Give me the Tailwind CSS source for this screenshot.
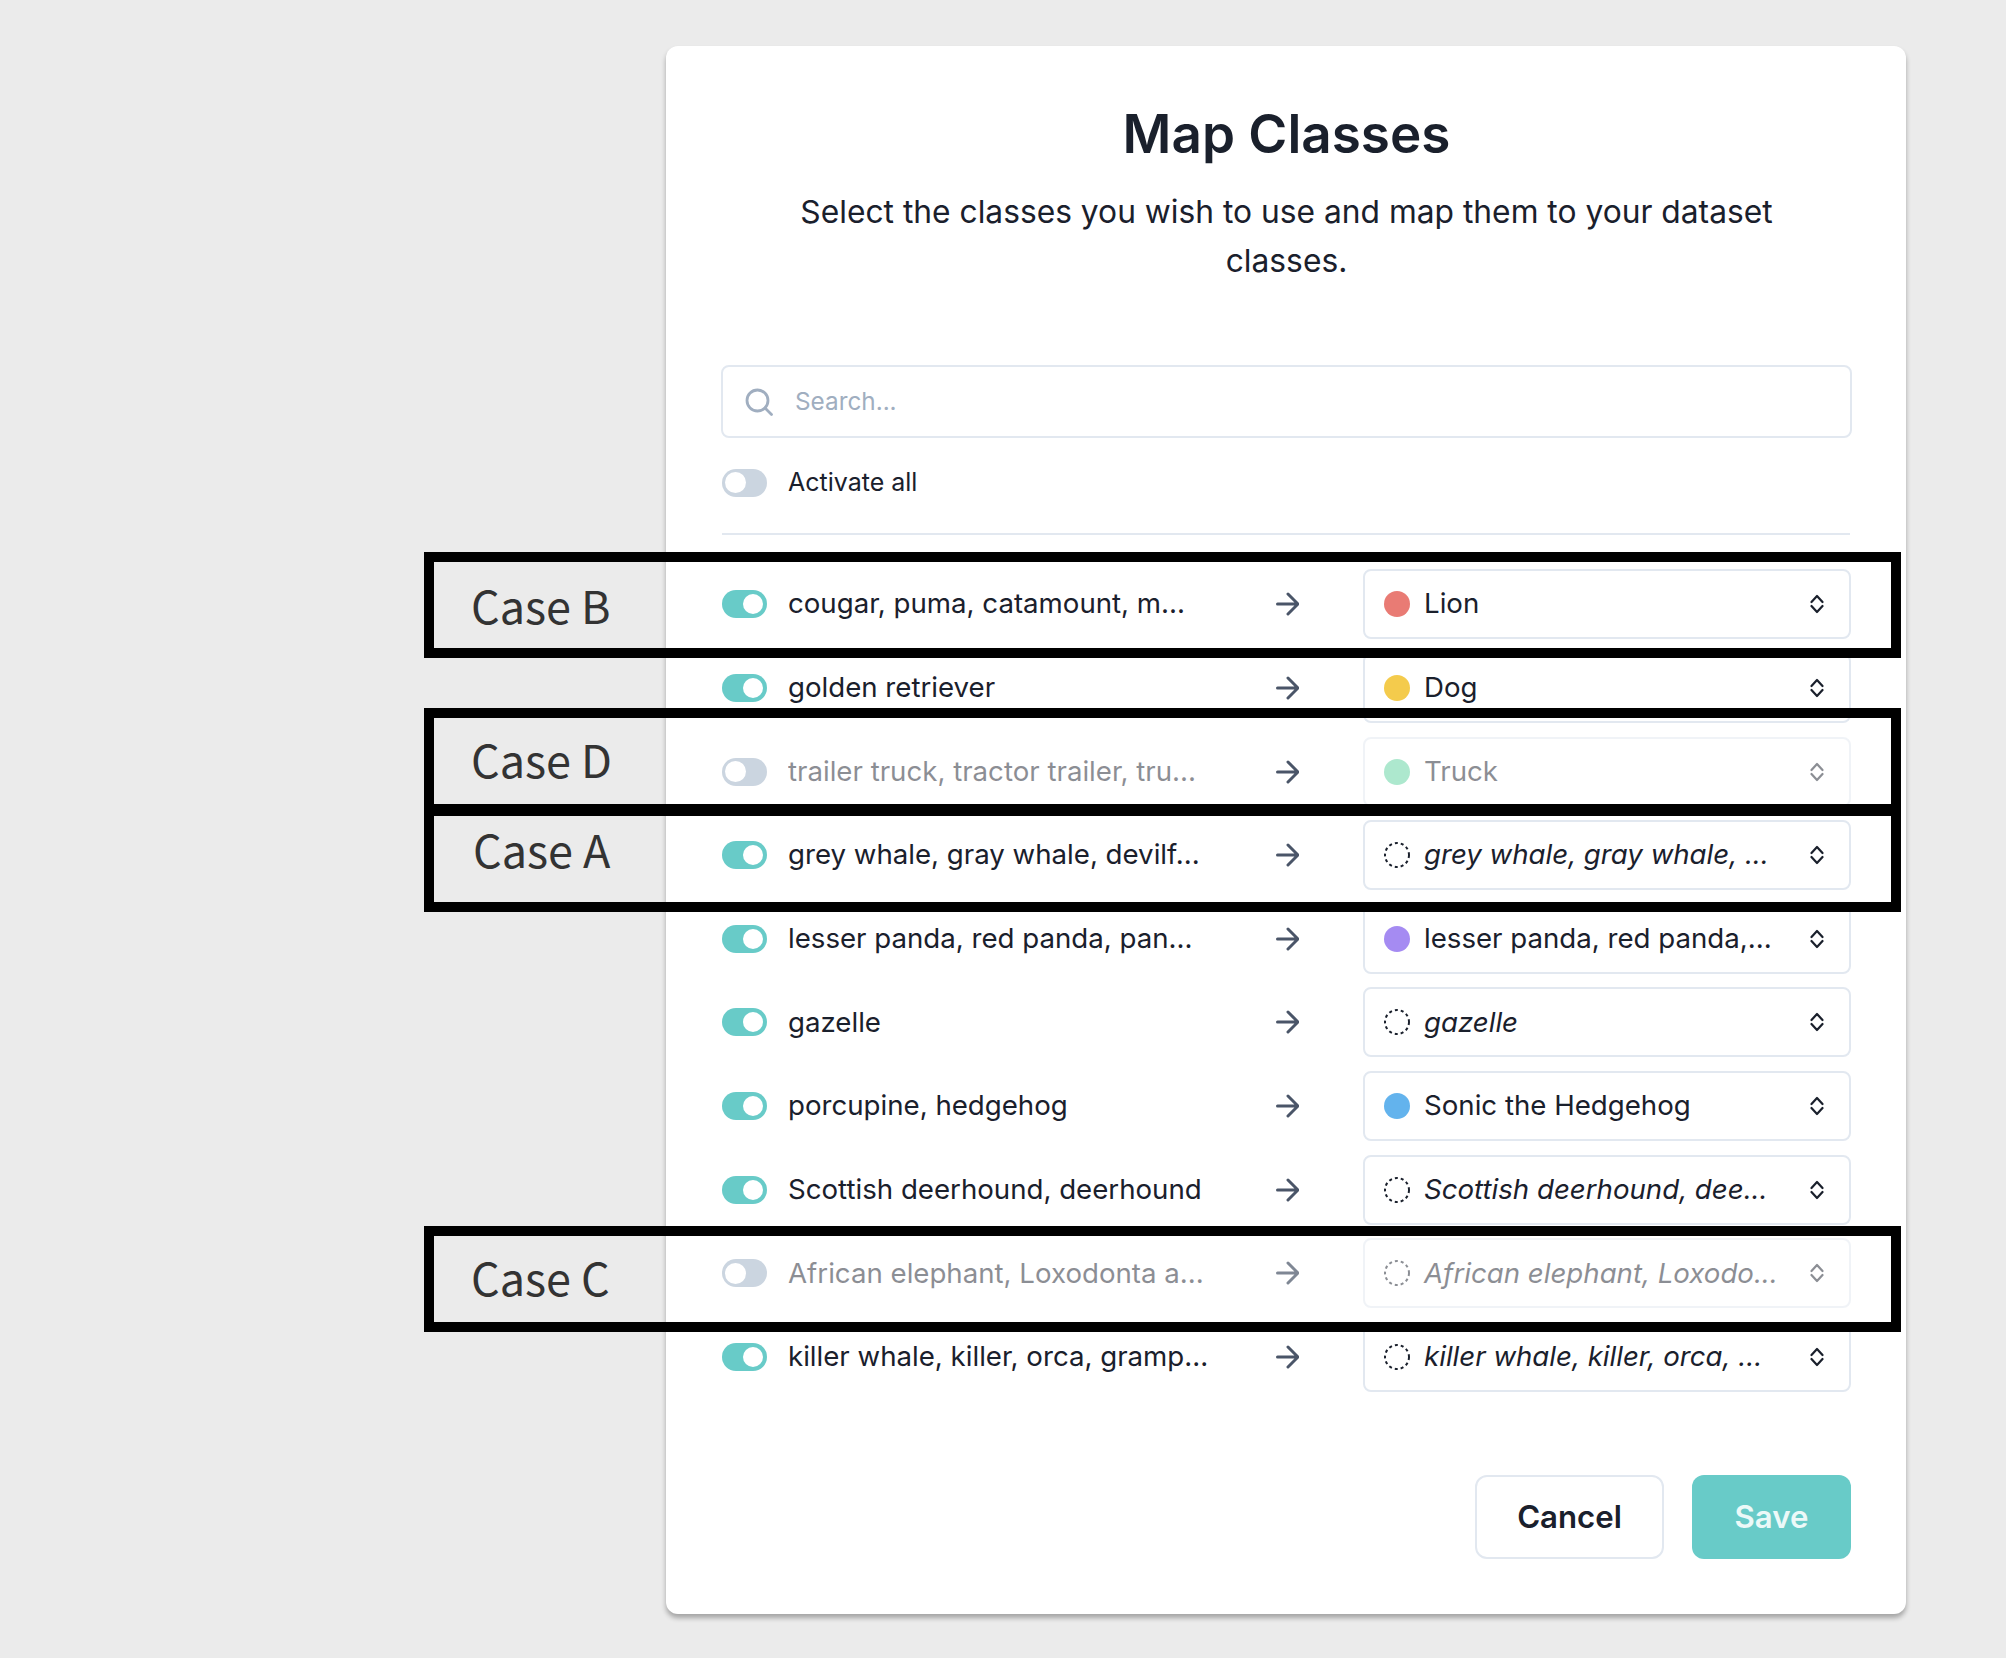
<!DOCTYPE html>
<html lang="en">
<head>
<meta charset="utf-8">
<title>Map Classes</title>
<script src="https://cdn.jsdelivr.net/npm/@tailwindcss/browser@4"></script>
</head>
<body class="relative m-0 h-[1658px] w-[2006px] overflow-hidden bg-[#ebebeb] font-['Inter',sans-serif] text-[#1a202c]">
<main class="ml-[666px] mt-[46px] flex h-[1568px] w-[1240px] flex-col rounded-xl bg-white pl-[55px] pr-[54px] shadow-[0_4px_5px_rgba(0,0,0,0.3)]">
  <h1 class="mt-[62px] text-center text-[53px] leading-[52px] font-semibold">Map Classes</h1>
  <p class="mx-auto mt-[28px] w-[1010px] text-center text-[31.75px] leading-[48.6px]">Select the classes you wish to use and map them to your dataset classes.</p>
  <div class="mt-[80px] flex h-[73px] items-center rounded-lg border-2 border-[#e2e8f0] pl-[22px]">
    <svg class="h-[28px] w-[28px] text-[#a0aec0]" viewBox="0 0 28 28" fill="none" stroke="currentColor" stroke-width="2.8" stroke-linecap="round"><circle cx="12.5" cy="12.5" r="10.5"/><path d="M20 20l6.5 6.5"/></svg>
    <span class="ml-[22px] text-[24.3px] text-[#a0aec0]">Search...</span>
  </div>
  <div class="mt-[30.5px] flex h-[28px] items-center pl-px">
    <span class="flex h-[28px] w-[45px] items-center justify-start rounded-full bg-[#cbd5e0] p-[3px]"><span class="h-[21px] w-[21px] rounded-full bg-white"></span></span>
    <span class="ml-[21px] text-[25px]">Activate all</span>
  </div>
  <div class="mt-[36.5px] ml-px h-[2px] w-[1128px] bg-[#e2e8f0]"></div>
  <div class="mt-[34px] flex flex-col gap-[13.67px]">
    <div class="flex h-[70px] items-center pl-px">
      <span class="flex h-[28px] w-[45px] items-center justify-end rounded-full bg-[#68cbc8] p-[4px]"><span class="h-[20px] w-[20px] rounded-full bg-white"></span></span>
      <span class="ml-[21px] w-[487px] text-[27.65px]">cougar, puma, catamount, m...</span>
      <svg class="h-[24px] w-[24px] text-[#4a5568]" viewBox="0 0 24 24" fill="none" stroke="currentColor" stroke-width="3" stroke-linecap="round" stroke-linejoin="round"><path d="M2.5 12h20M13 2l10 10-10 10"/></svg>
      <div class="ml-auto mr-px flex h-[70px] w-[488px] items-center rounded-lg border-2 border-[#e2e8f0] pl-[19px] pr-[25px]">
        <span class="h-[26px] w-[26px] rounded-full bg-[#e97b74]"></span>
        <span class="ml-[14px] flex-1 text-[27.65px]">Lion</span>
        <svg class="h-[20px] w-[14px]" viewBox="0 0 14 20" fill="none" stroke="currentColor" stroke-width="2.2" stroke-linecap="round" stroke-linejoin="round"><path d="M1.5 8 7 2l5.5 6M1.5 12 7 18l5.5-6"/></svg>
      </div>
    </div>
    <div class="flex h-[70px] items-center pl-px">
      <span class="flex h-[28px] w-[45px] items-center justify-end rounded-full bg-[#68cbc8] p-[4px]"><span class="h-[20px] w-[20px] rounded-full bg-white"></span></span>
      <span class="ml-[21px] w-[487px] text-[27.65px]">golden retriever</span>
      <svg class="h-[24px] w-[24px] text-[#4a5568]" viewBox="0 0 24 24" fill="none" stroke="currentColor" stroke-width="3" stroke-linecap="round" stroke-linejoin="round"><path d="M2.5 12h20M13 2l10 10-10 10"/></svg>
      <div class="ml-auto mr-px flex h-[70px] w-[488px] items-center rounded-lg border-2 border-[#e2e8f0] pl-[19px] pr-[25px]">
        <span class="h-[26px] w-[26px] rounded-full bg-[#f4cb4c]"></span>
        <span class="ml-[14px] flex-1 text-[27.65px]">Dog</span>
        <svg class="h-[20px] w-[14px]" viewBox="0 0 14 20" fill="none" stroke="currentColor" stroke-width="2.2" stroke-linecap="round" stroke-linejoin="round"><path d="M1.5 8 7 2l5.5 6M1.5 12 7 18l5.5-6"/></svg>
      </div>
    </div>
    <div class="flex h-[70px] items-center pl-px">
      <span class="flex h-[28px] w-[45px] items-center justify-start rounded-full bg-[#cbd5e0] p-[3px]"><span class="h-[21px] w-[21px] rounded-full bg-white"></span></span>
      <span class="ml-[21px] w-[487px] text-[27.65px] opacity-50">trailer truck, tractor trailer, tru...</span>
      <svg class="h-[24px] w-[24px] text-[#4a5568]" viewBox="0 0 24 24" fill="none" stroke="currentColor" stroke-width="3" stroke-linecap="round" stroke-linejoin="round"><path d="M2.5 12h20M13 2l10 10-10 10"/></svg>
      <div class="ml-auto mr-px flex h-[70px] w-[488px] items-center rounded-lg border-2 border-[#e2e8f0]/50 pl-[19px] pr-[25px]">
        <span class="h-[26px] w-[26px] rounded-full bg-[#ade8ce]"></span>
        <span class="ml-[14px] flex-1 text-[27.65px] opacity-50">Truck</span>
        <svg class="h-[20px] w-[14px] opacity-50" viewBox="0 0 14 20" fill="none" stroke="currentColor" stroke-width="2.2" stroke-linecap="round" stroke-linejoin="round"><path d="M1.5 8 7 2l5.5 6M1.5 12 7 18l5.5-6"/></svg>
      </div>
    </div>
    <div class="flex h-[70px] items-center pl-px">
      <span class="flex h-[28px] w-[45px] items-center justify-end rounded-full bg-[#68cbc8] p-[4px]"><span class="h-[20px] w-[20px] rounded-full bg-white"></span></span>
      <span class="ml-[21px] w-[487px] text-[27.65px]">grey whale, gray whale, devilf...</span>
      <svg class="h-[24px] w-[24px] text-[#4a5568]" viewBox="0 0 24 24" fill="none" stroke="currentColor" stroke-width="3" stroke-linecap="round" stroke-linejoin="round"><path d="M2.5 12h20M13 2l10 10-10 10"/></svg>
      <div class="ml-auto mr-px flex h-[70px] w-[488px] items-center rounded-lg border-2 border-[#e2e8f0] pl-[19px] pr-[25px]">
        <svg class="h-[26px] w-[26px]" viewBox="0 0 26 26" fill="none" stroke="currentColor" stroke-width="2" stroke-dasharray="3 3"><circle cx="13" cy="13" r="12"/></svg>
        <span class="ml-[14px] flex-1 text-[27.65px] italic">grey whale, gray whale, ...</span>
        <svg class="h-[20px] w-[14px]" viewBox="0 0 14 20" fill="none" stroke="currentColor" stroke-width="2.2" stroke-linecap="round" stroke-linejoin="round"><path d="M1.5 8 7 2l5.5 6M1.5 12 7 18l5.5-6"/></svg>
      </div>
    </div>
    <div class="flex h-[70px] items-center pl-px">
      <span class="flex h-[28px] w-[45px] items-center justify-end rounded-full bg-[#68cbc8] p-[4px]"><span class="h-[20px] w-[20px] rounded-full bg-white"></span></span>
      <span class="ml-[21px] w-[487px] text-[27.65px]">lesser panda, red panda, pan...</span>
      <svg class="h-[24px] w-[24px] text-[#4a5568]" viewBox="0 0 24 24" fill="none" stroke="currentColor" stroke-width="3" stroke-linecap="round" stroke-linejoin="round"><path d="M2.5 12h20M13 2l10 10-10 10"/></svg>
      <div class="ml-auto mr-px flex h-[70px] w-[488px] items-center rounded-lg border-2 border-[#e2e8f0] pl-[19px] pr-[25px]">
        <span class="h-[26px] w-[26px] rounded-full bg-[#a58bf2]"></span>
        <span class="ml-[14px] flex-1 text-[27.65px]">lesser panda, red panda,...</span>
        <svg class="h-[20px] w-[14px]" viewBox="0 0 14 20" fill="none" stroke="currentColor" stroke-width="2.2" stroke-linecap="round" stroke-linejoin="round"><path d="M1.5 8 7 2l5.5 6M1.5 12 7 18l5.5-6"/></svg>
      </div>
    </div>
    <div class="flex h-[70px] items-center pl-px">
      <span class="flex h-[28px] w-[45px] items-center justify-end rounded-full bg-[#68cbc8] p-[4px]"><span class="h-[20px] w-[20px] rounded-full bg-white"></span></span>
      <span class="ml-[21px] w-[487px] text-[27.65px]">gazelle</span>
      <svg class="h-[24px] w-[24px] text-[#4a5568]" viewBox="0 0 24 24" fill="none" stroke="currentColor" stroke-width="3" stroke-linecap="round" stroke-linejoin="round"><path d="M2.5 12h20M13 2l10 10-10 10"/></svg>
      <div class="ml-auto mr-px flex h-[70px] w-[488px] items-center rounded-lg border-2 border-[#e2e8f0] pl-[19px] pr-[25px]">
        <svg class="h-[26px] w-[26px]" viewBox="0 0 26 26" fill="none" stroke="currentColor" stroke-width="2" stroke-dasharray="3 3"><circle cx="13" cy="13" r="12"/></svg>
        <span class="ml-[14px] flex-1 text-[27.65px] italic">gazelle</span>
        <svg class="h-[20px] w-[14px]" viewBox="0 0 14 20" fill="none" stroke="currentColor" stroke-width="2.2" stroke-linecap="round" stroke-linejoin="round"><path d="M1.5 8 7 2l5.5 6M1.5 12 7 18l5.5-6"/></svg>
      </div>
    </div>
    <div class="flex h-[70px] items-center pl-px">
      <span class="flex h-[28px] w-[45px] items-center justify-end rounded-full bg-[#68cbc8] p-[4px]"><span class="h-[20px] w-[20px] rounded-full bg-white"></span></span>
      <span class="ml-[21px] w-[487px] text-[27.65px]">porcupine, hedgehog</span>
      <svg class="h-[24px] w-[24px] text-[#4a5568]" viewBox="0 0 24 24" fill="none" stroke="currentColor" stroke-width="3" stroke-linecap="round" stroke-linejoin="round"><path d="M2.5 12h20M13 2l10 10-10 10"/></svg>
      <div class="ml-auto mr-px flex h-[70px] w-[488px] items-center rounded-lg border-2 border-[#e2e8f0] pl-[19px] pr-[25px]">
        <span class="h-[26px] w-[26px] rounded-full bg-[#63b3ed]"></span>
        <span class="ml-[14px] flex-1 text-[27.65px]">Sonic the Hedgehog</span>
        <svg class="h-[20px] w-[14px]" viewBox="0 0 14 20" fill="none" stroke="currentColor" stroke-width="2.2" stroke-linecap="round" stroke-linejoin="round"><path d="M1.5 8 7 2l5.5 6M1.5 12 7 18l5.5-6"/></svg>
      </div>
    </div>
    <div class="flex h-[70px] items-center pl-px">
      <span class="flex h-[28px] w-[45px] items-center justify-end rounded-full bg-[#68cbc8] p-[4px]"><span class="h-[20px] w-[20px] rounded-full bg-white"></span></span>
      <span class="ml-[21px] w-[487px] text-[27.65px]">Scottish deerhound, deerhound</span>
      <svg class="h-[24px] w-[24px] text-[#4a5568]" viewBox="0 0 24 24" fill="none" stroke="currentColor" stroke-width="3" stroke-linecap="round" stroke-linejoin="round"><path d="M2.5 12h20M13 2l10 10-10 10"/></svg>
      <div class="ml-auto mr-px flex h-[70px] w-[488px] items-center rounded-lg border-2 border-[#e2e8f0] pl-[19px] pr-[25px]">
        <svg class="h-[26px] w-[26px]" viewBox="0 0 26 26" fill="none" stroke="currentColor" stroke-width="2" stroke-dasharray="3 3"><circle cx="13" cy="13" r="12"/></svg>
        <span class="ml-[14px] flex-1 text-[27.65px] italic">Scottish deerhound, dee...</span>
        <svg class="h-[20px] w-[14px]" viewBox="0 0 14 20" fill="none" stroke="currentColor" stroke-width="2.2" stroke-linecap="round" stroke-linejoin="round"><path d="M1.5 8 7 2l5.5 6M1.5 12 7 18l5.5-6"/></svg>
      </div>
    </div>
    <div class="flex h-[70px] items-center pl-px">
      <span class="flex h-[28px] w-[45px] items-center justify-start rounded-full bg-[#cbd5e0] p-[3px]"><span class="h-[21px] w-[21px] rounded-full bg-white"></span></span>
      <span class="ml-[21px] w-[487px] text-[27.65px] opacity-50">African elephant, Loxodonta a...</span>
      <svg class="h-[24px] w-[24px] text-[#4a5568] opacity-70" viewBox="0 0 24 24" fill="none" stroke="currentColor" stroke-width="3" stroke-linecap="round" stroke-linejoin="round"><path d="M2.5 12h20M13 2l10 10-10 10"/></svg>
      <div class="ml-auto mr-px flex h-[70px] w-[488px] items-center rounded-lg border-2 border-[#e2e8f0]/50 pl-[19px] pr-[25px]">
        <svg class="h-[26px] w-[26px] opacity-50" viewBox="0 0 26 26" fill="none" stroke="currentColor" stroke-width="2" stroke-dasharray="3 3"><circle cx="13" cy="13" r="12"/></svg>
        <span class="ml-[14px] flex-1 text-[27.65px] italic opacity-50">African elephant, Loxodo...</span>
        <svg class="h-[20px] w-[14px] opacity-50" viewBox="0 0 14 20" fill="none" stroke="currentColor" stroke-width="2.2" stroke-linecap="round" stroke-linejoin="round"><path d="M1.5 8 7 2l5.5 6M1.5 12 7 18l5.5-6"/></svg>
      </div>
    </div>
    <div class="flex h-[70px] items-center pl-px">
      <span class="flex h-[28px] w-[45px] items-center justify-end rounded-full bg-[#68cbc8] p-[4px]"><span class="h-[20px] w-[20px] rounded-full bg-white"></span></span>
      <span class="ml-[21px] w-[487px] text-[27.65px]">killer whale, killer, orca, gramp...</span>
      <svg class="h-[24px] w-[24px] text-[#4a5568]" viewBox="0 0 24 24" fill="none" stroke="currentColor" stroke-width="3" stroke-linecap="round" stroke-linejoin="round"><path d="M2.5 12h20M13 2l10 10-10 10"/></svg>
      <div class="ml-auto mr-px flex h-[70px] w-[488px] items-center rounded-lg border-2 border-[#e2e8f0] pl-[19px] pr-[25px]">
        <svg class="h-[26px] w-[26px]" viewBox="0 0 26 26" fill="none" stroke="currentColor" stroke-width="2" stroke-dasharray="3 3"><circle cx="13" cy="13" r="12"/></svg>
        <span class="ml-[14px] flex-1 text-[27.65px] italic">killer whale, killer, orca, ...</span>
        <svg class="h-[20px] w-[14px]" viewBox="0 0 14 20" fill="none" stroke="currentColor" stroke-width="2.2" stroke-linecap="round" stroke-linejoin="round"><path d="M1.5 8 7 2l5.5 6M1.5 12 7 18l5.5-6"/></svg>
      </div>
    </div>
  </div>
  <div class="mt-auto mb-[55px] mr-px flex justify-end gap-[28px]">
    <button class="h-[84px] w-[189px] rounded-xl border-2 border-[#e2e8f0] bg-white text-[31.2px] font-semibold">Cancel</button>
    <button class="h-[84px] w-[159px] rounded-xl bg-[#68cbc8] text-[31.2px] font-semibold text-[#ecf9f8]">Save</button>
  </div>
</main>
<div class="absolute left-[424px] top-[552px] h-[106px] w-[1477px] border-[10px] border-black"><span class="absolute left-[37px] top-[7px] font-['Noto_Sans_CJK_SC',sans-serif] text-[45px] leading-[72px] text-[#333]">Case B</span></div>
<div class="absolute left-[424px] top-[708px] h-[106px] w-[1477px] border-[10px] border-black"><span class="absolute left-[37px] top-[5px] font-['Noto_Sans_CJK_SC',sans-serif] text-[45px] leading-[72px] text-[#333]">Case D</span></div>
<div class="absolute left-[424px] top-[806px] h-[106px] w-[1477px] border-[10px] border-black"><span class="absolute left-[39px] top-[-3px] font-['Noto_Sans_CJK_SC',sans-serif] text-[45px] leading-[72px] text-[#333]">Case A</span></div>
<div class="absolute left-[424px] top-[1226px] h-[106px] w-[1477px] border-[10px] border-black"><span class="absolute left-[37px] top-[5px] font-['Noto_Sans_CJK_SC',sans-serif] text-[45px] leading-[72px] text-[#333]">Case C</span></div>
</body>
</html>
